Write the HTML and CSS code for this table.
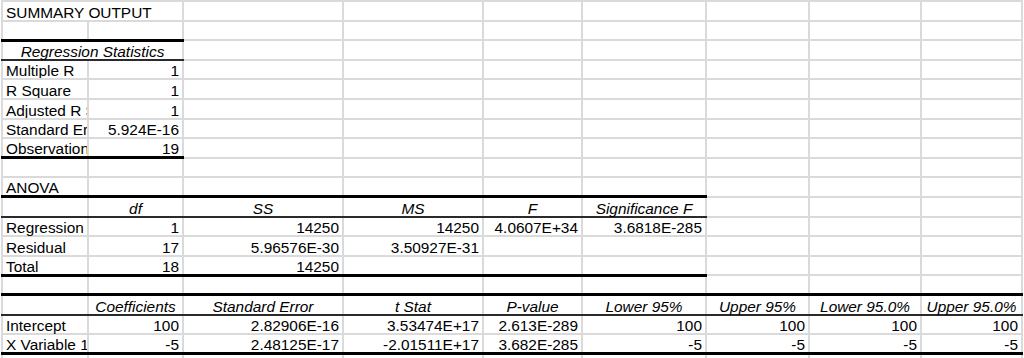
FILE: index.html
```html
<!DOCTYPE html>
<html>
<head>
<meta charset="utf-8">
<link rel="stylesheet" href="styles.css">
</head>
<body>
<table class="sheet">
<colgroup>
<col class="ca"><col class="cb"><col class="cc"><col class="cd"><col class="ce"><col class="cf"><col class="cg"><col class="ch"><col class="ci">
</colgroup>
<tr><td colspan="2">SUMMARY OUTPUT</td><td></td><td></td><td></td><td></td><td></td><td></td><td></td></tr>
<tr><td class="bt"></td><td class="bt"></td><td></td><td></td><td></td><td></td><td></td><td></td><td></td></tr>
<tr><td colspan="2" class="hd bd">Regression Statistics</td><td></td><td></td><td></td><td></td><td></td><td></td><td></td></tr>
<tr><td class="lbl">Multiple R</td><td class="num">1</td><td></td><td></td><td></td><td></td><td></td><td></td><td></td></tr>
<tr><td class="lbl">R Square</td><td class="num">1</td><td></td><td></td><td></td><td></td><td></td><td></td><td></td></tr>
<tr><td class="lbl">Adjusted R Square</td><td class="num">1</td><td></td><td></td><td></td><td></td><td></td><td></td><td></td></tr>
<tr><td class="lbl">Standard Error</td><td class="num">5.924E-16</td><td></td><td></td><td></td><td></td><td></td><td></td><td></td></tr>
<tr><td class="lbl bt">Observations</td><td class="num bt">19</td><td></td><td></td><td></td><td></td><td></td><td></td><td></td></tr>
<tr><td></td><td></td><td></td><td></td><td></td><td></td><td></td><td></td><td></td></tr>
<tr><td class="bt">ANOVA</td><td class="bt"></td><td class="bt"></td><td class="bt"></td><td class="bt"></td><td class="bt"></td><td></td><td></td><td></td></tr>
<tr><td class="bd"></td><td class="hd bd">df</td><td class="hd bd">SS</td><td class="hd bd">MS</td><td class="hd bd">F</td><td class="hd bd">Significance F</td><td></td><td></td><td></td></tr>
<tr><td>Regression</td><td class="num">1</td><td class="num">14250</td><td class="num">14250</td><td class="num">4.0607E+34</td><td class="num">3.6818E-285</td><td></td><td></td><td></td></tr>
<tr><td>Residual</td><td class="num">17</td><td class="num">5.96576E-30</td><td class="num">3.50927E-31</td><td></td><td></td><td></td><td></td><td></td></tr>
<tr><td class="bt">Total</td><td class="num bt">18</td><td class="num bt">14250</td><td class="bt"></td><td class="bt"></td><td class="bt"></td><td></td><td></td><td></td></tr>
<tr><td class="bt"></td><td class="bt"></td><td class="bt"></td><td class="bt"></td><td class="bt"></td><td class="bt"></td><td class="bt"></td><td class="bt"></td><td class="bt"></td></tr>
<tr><td class="bd"></td><td class="hd bd">Coefficients</td><td class="hd bd">Standard Error</td><td class="hd bd">t Stat</td><td class="hd bd">P-value</td><td class="hd bd">Lower 95%</td><td class="hd bd">Upper 95%</td><td class="hd bd">Lower 95.0%</td><td class="hd bd">Upper 95.0%</td></tr>
<tr><td>Intercept</td><td class="num">100</td><td class="num">2.82906E-16</td><td class="num">3.53474E+17</td><td class="num">2.613E-289</td><td class="num">100</td><td class="num">100</td><td class="num">100</td><td class="num">100</td></tr>
<tr><td class="lbl bt">X Variable 1</td><td class="num bt">-5</td><td class="num bt">2.48125E-17</td><td class="num bt">-2.01511E+17</td><td class="num bt">3.682E-285</td><td class="num bt">-5</td><td class="num bt">-5</td><td class="num bt">-5</td><td class="num bt">-5</td></tr>
<tr><td></td><td></td><td></td><td></td><td></td><td></td><td></td><td></td><td></td></tr>
</table>
</body>
</html>
```
FILE: styles.css
```css
html, body {
  margin: 0;
  padding: 0;
  background: #ffffff;
  overflow: hidden;
}

.sheet {
  margin: 0 0 0 1px;
  border-collapse: collapse;
  table-layout: fixed;
  width: 1022px;
  font-family: "Liberation Sans", Arial, sans-serif;
  font-size: 15.4px;
  color: #000000;
}

.ca { width: 86px; }
.cb { width: 95px; }
.cc { width: 160px; }
.cd { width: 140px; }
.ce { width: 99px; }
.cf { width: 124px; }
.cg { width: 103px; }
.ch { width: 112px; }
.ci { width: 101px; }

.sheet tr {
  height: 19.6px;
}

.sheet td {
  border: 2px solid #dadada;
  padding: 0 3px;
  line-height: 14px;
  vertical-align: bottom;
  white-space: nowrap;
  text-align: left;
}

.sheet td.lbl {
  overflow: hidden;
  text-overflow: clip;
}

.sheet td.num {
  text-align: right;
}

.sheet td.hd {
  font-style: italic;
  text-align: center;
}

.sheet td.bd {
  border-bottom: 2px solid #2a2a2a;
}

.sheet td.bt {
  border-bottom: 3px solid #000000;
}
```
